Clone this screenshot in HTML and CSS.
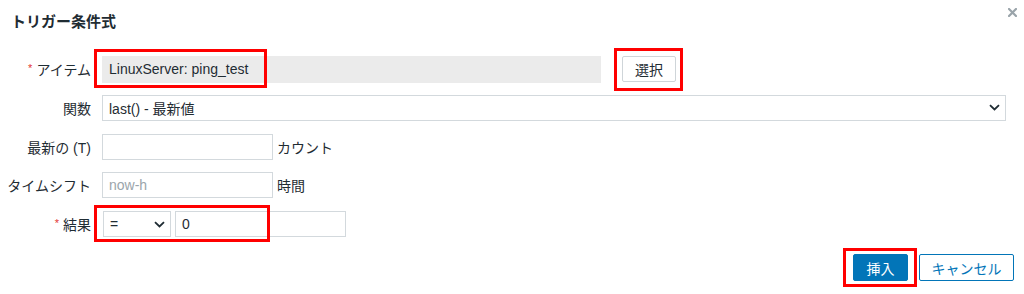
FILE: index.html
```html
<!DOCTYPE html>
<html lang="ja">
<head>
<meta charset="utf-8">
<title>トリガー条件式</title>
<link rel="stylesheet" href="styles.css">
</head>
<body>
<div class="dialog">
  <div class="head">
    <h2 class="title">トリガー条件式</h2>
    <button class="close" aria-label="close">
      <svg width="9" height="9" viewBox="0 0 9 9"><path d="M1 1L8 8M8 1L1 8" stroke="#9aa4aa" stroke-width="2.2" stroke-linecap="square"/></svg>
    </button>
  </div>
  <div class="form">
    <div class="row">
      <div class="lbl"><span class="req">*</span>アイテム</div>
      <div class="ctl">
        <div class="inp ro item">LinuxServer: ping_test</div>
        <button class="btn-sel">選択</button>
      </div>
    </div>
    <div class="row">
      <div class="lbl">関数</div>
      <div class="ctl">
        <div class="inp sel func"><span>last() - 最新値</span>
          <svg class="chev" width="11" height="7" viewBox="0 0 11 7"><path d="M1 1.2L5.5 5.5L10 1.2" fill="none" stroke="#1f2c33" stroke-width="1.8"/></svg>
        </div>
      </div>
    </div>
    <div class="row">
      <div class="lbl">最新の (T)</div>
      <div class="ctl">
        <div class="inp short"></div>
        <span class="unit">カウント</span>
      </div>
    </div>
    <div class="row">
      <div class="lbl">タイムシフト</div>
      <div class="ctl">
        <div class="inp short ph">now-h</div>
        <span class="unit">時間</span>
      </div>
    </div>
    <div class="row">
      <div class="lbl"><span class="req">*</span>結果</div>
      <div class="ctl tight">
        <div class="inp sel op"><span>=</span>
          <svg class="chev" width="11" height="7" viewBox="0 0 11 7"><path d="M1 1.2L5.5 5.5L10 1.2" fill="none" stroke="#1f2c33" stroke-width="1.8"/></svg>
        </div>
        <div class="inp short">0</div>
      </div>
    </div>
  </div>
  <div class="foot">
    <button class="btn-primary">挿入</button>
    <button class="btn-alt">キャンセル</button>
  </div>
  <div class="mark m1"></div>
  <div class="mark m2"></div>
  <div class="mark m3"></div>
  <div class="mark m4"></div>
</div>
</body>
</html>
```
FILE: styles.css
```css
* { box-sizing: border-box; }
html, body { margin: 0; padding: 0; background: #ffffff; }
body {
  font-family: "Liberation Sans", Arial, "Noto Sans CJK JP", sans-serif;
  font-size: 14px;
  color: #1f2c33;
  width: 1024px;
  height: 294px;
  overflow: hidden;
}
.dialog { position: relative; width: 1024px; height: 294px; padding: 0 10px 0 0; }
.head { display: flex; justify-content: space-between; align-items: flex-start; height: 56px; }
.title {
  margin: 13px 0 0 11px;
  font-size: 15px;
  font-weight: bold;
  line-height: 18px;
  color: #1f2c33;
}
.close { border: 0; background: none; padding: 0; margin: 8px -3px 0 0; width: 9px; height: 9px; display: flex; }
.form { display: flex; flex-direction: column; gap: 12.75px; }
.row { display: flex; align-items: center; height: 26px; }
.lbl { width: 92px; text-align: right; padding-right: 1px; white-space: nowrap; flex: none; }
.req { color: #e33734; font-size: 11px; margin-right: 4px; position: relative; top: -3px; }
.ctl { display: flex; align-items: center; margin-left: 10px; flex: 1; height: 100%; }
.inp {
  height: 26px;
  border: 1px solid #d3d9dd;
  background: #ffffff;
  padding: 0 6px;
  display: flex;
  align-items: center;
  white-space: nowrap;
}
.ro { background: #ebebeb; border-color: #ebebeb; height: 27px; }
.item { width: 499px; }
.btn-sel {
  margin-left: 21px;
  width: 54px;
  height: 26px;
  background: #ffffff;
  border: 1px solid #cfd5d9;
  border-radius: 2px;
  font: inherit;
  color: #1f2c33;
  padding: 0;
}
.sel { justify-content: space-between; padding-right: 5px; }
.func { width: 904px; }
.short { width: 171px; }
.ph { color: #9ba5ab; }
.unit { margin-left: 4px; }
.tight { gap: 4px; }
.op { width: 68px; margin-left: 1px; }
.foot { display: flex; justify-content: flex-end; gap: 11px; margin-top: 17px; }
.btn-primary {
  width: 55px; height: 27px;
  background: #0275b8; color: #ffffff;
  border: 1px solid #0275b8; border-radius: 2px;
  font: inherit; padding: 0;
}
.btn-alt {
  width: 95px; height: 27px;
  background: #ffffff; color: #0275b8;
  border: 1px solid #0275b8; border-radius: 2px;
  font: inherit; padding: 0;
}
.mark { position: absolute; border: 3px solid #ff0000; pointer-events: none; }
.m1 { left: 94px; top: 49px; width: 173px; height: 39px; }
.m2 { left: 614px; top: 48px; width: 69px; height: 43px; }
.m3 { left: 94px; top: 205px; width: 176px; height: 37px; }
.m4 { left: 843px; top: 248px; width: 74px; height: 39px; }
```
